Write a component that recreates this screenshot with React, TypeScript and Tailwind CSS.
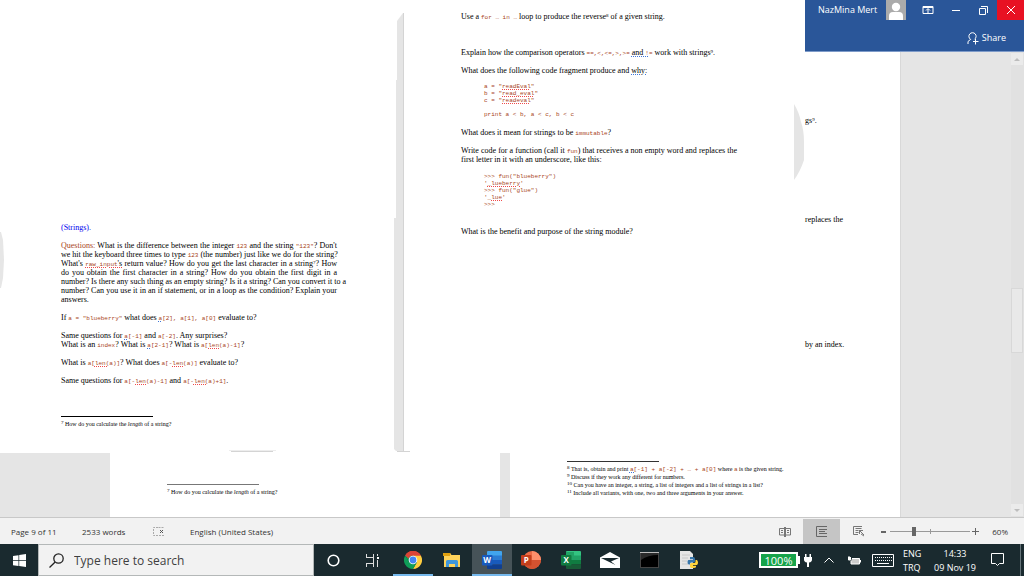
import type { ReactNode } from 'react';

function Code({ children }: { children: ReactNode }) {
  return <code className="font-['Liberation_Mono',monospace] text-[6px] leading-none text-[#a8441a]">{children}</code>;
}

function Wavy({ children }: { children: ReactNode }) {
  return <span className="underline decoration-[#f04a4a] decoration-dotted decoration-1 underline-offset-1">{children}</span>;
}

function BlueWavy({ children }: { children: ReactNode }) {
  return <span className="underline decoration-[#3f76d8] decoration-dotted decoration-1 underline-offset-1">{children}</span>;
}

function Sup({ children }: { children: ReactNode }) {
  return <sup className="text-[5px] leading-[0]">{children}</sup>;
}

function Justified({ children }: { children: ReactNode }) {
  return <span className="block whitespace-nowrap [text-align-last:justify]">{children}</span>;
}

function PageNine() {
  return (
    <article className="min-w-0 grow-[394] basis-0">
      <div className="flex flex-col gap-[9px] pl-[61px] pr-[57px] pt-[223px]">
        <p className="text-[#0000ee]">(Strings).</p>
        <p>
          <Justified>
            <span className="text-[#a8441a]">Questions:</span> What is the difference between the integer <Code>123</Code> and the string <Code>"123"</Code>? Don't
          </Justified>
          <Justified>we hit the keyboard three times to type <Code>123</Code> (the number) just like we do for the string?</Justified>
          <Justified>
            What's <Code><Wavy>raw_input</Wavy></Code><Wavy>'s</Wavy> return value? How do you get the last character in a string<Sup>7</Sup>? How
          </Justified>
          <Justified>do you obtain the first character in a string? How do you obtain the first digit in a</Justified>
          <Justified>number? Is there any such thing as an empty string? Is it a string? Can you convert it to a</Justified>
          <Justified>number? Can you use it in an if statement, or in a loop as the condition? Explain your</Justified>
          <span className="block">answers.</span>
        </p>
        <p>
          If <Code>a = "blueberry"</Code> what does <Code><BlueWavy>a[</BlueWavy>2], a[1], a[0]</Code> evaluate to?
        </p>
        <p>
          Same questions for <Code><BlueWavy>a[</BlueWavy>-1]</Code> and <Code>a[-2]</Code>. Any surprises?
          <br />
          What is an <Code>index</Code>? What is <Code><BlueWavy>a[</BlueWavy>2-1]</Code>? What is <Code>a[<Wavy>len(</Wavy>a)-1]</Code>?
        </p>
        <p>
          What is <Code>a[<Wavy>len(</Wavy>a)]</Code>? What does <Code>a[-<Wavy>len(</Wavy>a)]</Code> evaluate to?
        </p>
        <p>
          Same questions for <Code>a[-<Wavy>len(</Wavy>a)-1]</Code> and <Code>a[-<Wavy>len(</Wavy>a)+1]</Code>.
        </p>
      </div>
      <FootnoteSeven className="ml-[61px] mt-[31px]" rule="bg-black" />
    </article>
  );
}

function FootnoteSeven({ className, rule }: { className: string; rule: string }) {
  return (
    <div className={className}>
      <div className={`h-px w-[92px] ${rule}`} />
      <p className="mt-[3px] text-[6px] leading-[8px]">
        <Sup>7</Sup> How do you calculate the <i>length</i> of a string?
      </p>
    </div>
  );
}

function PageTen() {
  return (
    <article className="min-w-0 grow-[401] basis-0">
      <div className="pl-[57px] pr-[68px] pt-[12px]">
        <p>
          Use a <Code>for … in …</Code> loop to produce the reverse<Sup>8</Sup> of a given string.
        </p>
        <p className="mt-[27px]">
          Explain how the comparison operators <Code>==,&lt;,&lt;=,&gt;,&gt;=</Code> <BlueWavy>and <Code>!</Code></BlueWavy><Code>=</Code> work with strings<Sup>9</Sup>.
        </p>
        <p className="mt-[9px]">
          What does the following code fragment produce and <BlueWavy>why:</BlueWavy>
        </p>
        <pre className="ml-[23px] mt-[8px] font-['Liberation_Mono',monospace] text-[6px] leading-[7px] text-[#a8441a]">
          a = "<Wavy>readEval</Wavy>"{'\n'}b = "<Wavy>read_eval</Wavy>"{'\n'}c = "<Wavy>readeval</Wavy>"{'\n\n'}print a &lt; b, a &lt; c, b &lt; c
        </pre>
        <p className="mt-[10px]">
          What does it mean for strings to be <Code>immutable</Code>?
        </p>
        <p className="mt-[9px]">
          <Justified>Write code for a function (call it <Code>fun</Code>) that receives a non empty word and replaces the</Justified>
          <span className="block">first letter in it with an underscore, like this:</span>
        </p>
        <pre className="ml-[23px] mt-[9px] font-['Liberation_Mono',monospace] text-[6px] leading-[7px] text-[#a8441a]">
          &gt;&gt;&gt; fun("blueberry"){'\n'}'<Wavy>_lueberry</Wavy>'{'\n'}&gt;&gt;&gt; fun("glue"){'\n'}'_<Wavy>lue</Wavy>'{'\n'}&gt;&gt;&gt;
        </pre>
        <p className="mt-[19px]">What is the benefit and purpose of the string module?</p>
      </div>
    </article>
  );
}

function PageEdges() {
  return (
    <svg className="pointer-events-none absolute inset-0 h-full w-full" viewBox="0 0 805 453" preserveAspectRatio="none" aria-hidden="true">
      <path d="M0 232h1l2 8 1 20-1 18-2 10H0z" fill="#e6e6e6" />
      <path d="M397 21l6-8h1v438h-8l-2-2V218h2V80h1z" fill="#e5e5e5" />
      <path d="M403.5 13v438M397 451.5h13" stroke="#d4d4d4" fill="none" />
      <path d="M229 450.5h47" stroke="#ededed" />
      <path d="M231 451.5h42" stroke="#d4d4d4" />
      <path d="M794 104q5 8 7 18 3 8 3 20v18q-4 12-10 20z" fill="#e5e5e5" />
    </svg>
  );
}

function LowerPages() {
  return (
    <div className="flex flex-1 bg-[#e5e5e5]">
      <div className="grow-[110] basis-0" />
      <div className="min-w-0 grow-[390] basis-0 bg-white">
        <FootnoteSeven className="ml-[57px] mt-[31px]" rule="bg-[#777]" />
      </div>
      <div className="grow-[10] basis-0" />
      <div className="min-w-0 grow-[295] basis-0 bg-white">
        <div className="whitespace-nowrap pl-[57px] pt-[8px] text-[6px] leading-[8px]">
          <div className="mb-[3px] h-px w-[92px] bg-[#333]" />
          <p><Sup>8</Sup> That is, obtain and print <Code><BlueWavy>a[</BlueWavy>-1] + a[-2] + … + a[0]</Code> where <Code>a</Code> is the given string.</p>
          <p><Sup>9</Sup> Discuss if they work any different for numbers.</p>
          <p><Sup>10</Sup> Can you have an integer, a string, a list of integers and a list of strings in a list?</p>
          <p><Sup>11</Sup> Include all variants, with one, two and three arguments in your answer.</p>
        </div>
      </div>
    </div>
  );
}

function TitleBar() {
  return (
    <header className="h-[52px] border-b border-[#7e9bc9] bg-[#2a5699] text-white">
      <div className="flex h-5 items-center">
        <span className="w-[81px] whitespace-nowrap pl-[13px] text-[9px]">NazMina Mert</span>
        <svg className="h-5 w-5 bg-[#ababab]" viewBox="0 0 20 20" aria-hidden="true">
          <circle cx="10" cy="7" r="4.2" fill="#fff" />
          <path d="M3 20v-4q0-4 4-4h6q4 0 4 4v4z" fill="#fff" />
        </svg>
        <button aria-label="Ribbon display options" className="ml-3 flex h-5 w-5 items-center justify-center">
          <svg width="12" height="10" viewBox="0 0 12 10" fill="none" stroke="#fff">
            <path d="M1 1.5h10v7H1zM1 2.5h10M6 8V4M4 5.5l2-2 2 2" />
          </svg>
        </button>
        <button aria-label="Minimize" className="ml-2 flex h-5 w-5 items-center justify-center">
          <span className="h-px w-2 bg-white" />
        </button>
        <button aria-label="Restore" className="ml-[7px] flex h-5 w-5 items-center justify-center">
          <svg width="9" height="9" viewBox="0 0 9 9" fill="none" stroke="#fff">
            <path d="M.5 2.5h6v6h-6zM2 .5h6.500v6.500" />
          </svg>
        </button>
        <button aria-label="Close" className="ml-auto flex h-5 w-[27px] items-center justify-center bg-[#e81123]">
          <svg width="8" height="8" viewBox="0 0 8 8" stroke="#fff"><path d="M0 0l8 8M8 0L0 8" /></svg>
        </button>
      </div>
      <button className="ml-auto mr-[18px] mt-[10px] flex items-center gap-[3px] text-[9px] leading-[16px]">
        <svg width="12" height="13" viewBox="0 0 12 13" fill="none" stroke="#fff" aria-hidden="true">
          <path d="M3.500 7.300A3.600 3.600 0 1 1 7.500 7.300M3.800 7.200L1 9.500V12M8.500 7v5.500M6 9.500h5.500" />
        </svg>
        Share
      </button>
    </header>
  );
}

function ScrollBar() {
  return (
    <div className="flex w-[13px] flex-col bg-[#e1e1e1]">
      <button aria-label="Scroll up" className="mt-px flex h-3 w-3 items-center justify-center bg-[#ebebeb]">
        <svg width="6" height="3" viewBox="0 0 6 3" fill="#bdbdbd"><path d="M3 0l3 3H0z" /></svg>
      </button>
      <div className="flex-[224]" />
      <div className="h-[65px] w-3 border border-[#d8d8d8] bg-[#e9e9e9]" />
      <div className="flex-[152]" />
      <button aria-label="Scroll down" className="mb-px flex h-3 w-3 items-center justify-center bg-[#ebebeb]">
        <svg width="6" height="3" viewBox="0 0 6 3" fill="#bdbdbd"><path d="M0 0h6L3 3z" /></svg>
      </button>
    </div>
  );
}

function StatusBar() {
  return (
    <div className="flex h-[27px] shrink-0 items-center whitespace-nowrap border-t border-[#c8c8c8] bg-[#f2f2f2] pt-px text-[8px] text-[#333]">
      <span className="w-[71px] pl-[11px]">Page 9 of 11</span>
      <span className="w-[71px] pl-[11px]">2533 words</span>
      <button aria-label="Proofing" className="ml-[11px]">
        <svg width="12" height="10" viewBox="0 0 12 10" fill="none" stroke="#aaa">
          <path d="M5 .5H.5v8H5M5.500.5H11M6 8.500h5" strokeDasharray="2 1" />
          <path d="M7 3l3 3M10 3L7 6" stroke="#555" />
        </svg>
      </button>
      <span className="ml-[25px]">English (United States)</span>
      <button aria-label="Read mode" className="ml-auto flex h-full w-[37px] items-center justify-center">
        <svg width="12" height="10" viewBox="0 0 12 10" fill="none" stroke="#777">
          <path d="M5 1.500H.5v6.500H5M7 1.500h4.500v6.500H7M5.500 0v10M6.500 0v10M2 3.500h2M2 5.500h2M8 3.500h2M8 5.500h2" />
        </svg>
      </button>
      <button aria-label="Print layout" className="flex h-full w-[37px] items-center justify-center bg-[#c5c5c5]">
        <svg width="12" height="11" viewBox="0 0 12 11" fill="none" stroke="#666">
          <path d="M11 .5H.5v10H11M3 3.500h8M3 5.500h6M3 7.500h8" />
        </svg>
      </button>
      <button aria-label="Web layout" className="flex h-full w-[37px] items-center justify-center">
        <svg width="12" height="11" viewBox="0 0 12 11" fill="none" stroke="#777">
          <path d="M5 8.500H.5v-8H9M2.500 2.500h6M2.500 4.500h3M2.500 6.500h3" />
          <path d="M6 4l5 5M7 4.500l3 0M6.500 5v3M8 8l3 2" />
        </svg>
      </button>
      <button aria-label="Zoom out" className="ml-1 flex h-full w-[6px] items-center"><span className="h-[2px] w-[5px] bg-[#666]" /></button>
      <div className="ml-[3px] flex items-center">
        <input
          type="range"
          aria-label="Zoom"
          min="0"
          max="100"
          defaultValue="28"
          className="h-[9px] w-[80px] appearance-none bg-[linear-gradient(#999,#999),linear-gradient(#999,#999)] bg-[length:100%_1px,1px_5px] bg-center bg-no-repeat [&::-webkit-slider-thumb]:h-[9px] [&::-webkit-slider-thumb]:w-[4px] [&::-webkit-slider-thumb]:appearance-none [&::-webkit-slider-thumb]:bg-[#666]"
        />
      </div>
      <button aria-label="Zoom in" className="ml-[2px] flex h-full items-center">
        <svg width="7" height="7" viewBox="0 0 7 7" stroke="#666"><path d="M0 3.500h7M3.500 0v7" /></svg>
      </button>
      <span className="ml-[13px] mr-4">60%</span>
    </div>
  );
}

function OfficeGlyph({ kind }: { kind: 'W' | 'X' }) {
  const c = kind === 'W' ? ['#41a5ee', '#2b7cd3', '#185abd', '#103f91', '#185abd'] : ['#33c481', '#21a366', '#107c41', '#185c37', '#107c41'];
  return (
    <svg width="20" height="18" viewBox="0 0 20 18" aria-hidden="true">
      <path d="M5 1q0-1 1-1h13q1 0 1 1v4H5z" fill={c[0]} />
      <path d="M5 4.500h15V9H5z" fill={c[1]} />
      <path d="M5 9h15v4.500H5z" fill={c[2]} />
      <path d="M5 13.500h15V17q0 1-1 1H6q-1 0-1-1z" fill={c[3]} />
      {kind === 'X' && <path d="M5 1h8v8H5z" fill="#21a366" />}
      <rect y="4" width="10.500" height="10.500" rx="1" fill={c[4]} />
      <text x="5.200" y="12" textAnchor="middle" fontSize="8" fontWeight="700" fill="#fff" fontFamily="Open Sans, sans-serif">{kind}</text>
    </svg>
  );
}

function TaskButton({ label, active, open, children }: { label: string; active?: boolean; open?: boolean; children: ReactNode }) {
  return (
    <button
      aria-label={label}
      className={`flex items-center justify-center border-b-2 pt-[2px] ${active ? 'bg-[#465358]' : ''} ${active || open ? 'border-[#76b9ed]' : 'border-transparent'}`}
    >
      {children}
    </button>
  );
}

function TaskBar() {
  return (
    <footer className="flex h-8 shrink-0 items-stretch bg-[#1a2a2f] text-white">
      <button aria-label="Start" className="flex w-[38px] items-center justify-center">
        <svg width="13" height="13" viewBox="0 0 13 13" fill="#fff">
          <path d="M0 2l5.500-.8V6.200H0zM6.200 1L13 0v6.200H6.200zM0 6.900h5.500v5L0 11.200zM6.200 6.900H13V13l-6.800-1z" />
        </svg>
      </button>
      <label className="flex w-[276px] items-center gap-[10px] border border-[#b4b8b8] bg-[#f2f2f2] pl-[10px]">
        <svg className="shrink-0" width="15" height="15" viewBox="0 0 15 15" fill="none" stroke="#222" strokeWidth="1.300" aria-hidden="true">
          <circle cx="9.500" cy="5.500" r="4.700" /><path d="M6.200 9L.5 14.500" />
        </svg>
        <input
          type="search"
          aria-label="Search"
          placeholder="Type here to search"
          className="w-full min-w-0 bg-transparent pt-[2px] text-[12px] outline-none placeholder:text-[#3f3f3f]"
        />
      </label>
      <div className="grid w-[395px] grid-cols-10">
        <TaskButton label="Cortana">
          <svg width="13" height="13" viewBox="0 0 13 13"><circle cx="6.500" cy="6.500" r="5.300" fill="none" stroke="#fff" strokeWidth="1.600" /></svg>
        </TaskButton>
        <TaskButton label="Task view">
          <svg width="15" height="13" viewBox="0 0 15 13" fill="none" stroke="#ddd">
            <path d="M.5 0v3M7.500 0v3M0 3.500h8M0 9.500h8M.5 10v3M7.500 10v3M7.500 3v7M11.500 0v2M11.500 6v7" />
            <path d="M11 3h2v2h-2z" fill="#fff" stroke="none" />
          </svg>
        </TaskButton>
        <TaskButton label="Chrome" open>
          <svg width="18" height="18" viewBox="0 0 18 18">
            <path d="M9 9L1.200 4.500A9 9 0 0 1 16.800 4.500z" fill="#db4437" />
            <path d="M9 9V4.500h7.800A9 9 0 0 1 9 18l3.900-6.750z" fill="#ffcd40" />
            <path d="M9 9l3.900 2.250L9 18A9 9 0 0 1 1.200 4.500l3.900 6.750z" fill="#0f9d58" />
            <path d="M1.200 4.500L5.100 11.200 9 9V4.500z" fill="#0f9d58" />
            <path d="M1.200 4.500A9 9 0 0 1 16.800 4.500H9a4.500 4.500 0 0 0-4.300 3.200z" fill="#db4437" />
            <circle cx="9" cy="9" r="4.300" fill="#fff" /><circle cx="9" cy="9" r="3.400" fill="#4285f4" />
          </svg>
        </TaskButton>
        <TaskButton label="File Explorer">
          <svg width="18" height="15" viewBox="0 0 18 15">
            <path d="M1 0h6l1.500 2H17v12H1z" fill="#ffd35b" /><path d="M0 0h7.500L7 3H0z" fill="#e0a010" />
            <path d="M3 14V8.500Q3 7 4.500 7h9Q15 7 15 8.500V14h-3v-3H6v3z" fill="#4097dc" />
          </svg>
        </TaskButton>
        <TaskButton label="Word" active><OfficeGlyph kind="W" /></TaskButton>
        <TaskButton label="PowerPoint">
          <svg width="20" height="18" viewBox="0 0 20 18">
            <circle cx="11" cy="9" r="9" fill="#ed6c47" /><path d="M11 0a9 9 0 0 1 9 9h-9z" fill="#ff8f6b" />
            <path d="M2 9h18a9 9 0 0 1-18 0z" fill="#d35230" />
            <rect y="4" width="10.500" height="10.500" rx="1" fill="#c43e1c" />
            <text x="5.300" y="12" textAnchor="middle" fontSize="8" fontWeight="700" fill="#fff" fontFamily="Open Sans, sans-serif">P</text>
          </svg>
        </TaskButton>
        <TaskButton label="Excel"><OfficeGlyph kind="X" /></TaskButton>
        <TaskButton label="Mail">
          <svg width="20" height="16" viewBox="0 0 20 16">
            <path d="M0 5.500L10 0l10 5.500V16H0z" fill="#fff" /><path d="M1 6h18L11 9.500l4.500 3.500z" fill="#1a2a2f" />
          </svg>
        </TaskButton>
        <TaskButton label="Command Prompt">
          <svg width="19" height="16" viewBox="0 0 19 16">
            <rect x=".5" y=".5" width="18" height="15" fill="#000" stroke="#444" /><path d="M1 1h17v2Q8 3 1 8z" fill="#2a2a2a" /><path d="M0 .5h19" stroke="#bbb" />
          </svg>
        </TaskButton>
        <TaskButton label="Python">
          <svg width="18" height="18" viewBox="0 0 18 18">
            <path d="M0 0h10l3 3v15H0z" fill="#e5e5e5" /><path d="M2 4h8M2 7h6M2 10h5M2 13h6" stroke="#c8c8c8" />
            <path d="M10 6h3q2 0 2 2v2q0 1.500-1.500 1.500H11q-1 0-1 2H9q-1.500 0-1.500-2.500T9 9h4V8.300h-3z" fill="#3776ab" />
            <path d="M15.500 9H17q1 1 1 2.500T17 14h-4v.700h3V16q0 1-3 1t-3-1.500v-2q0-1.500 1.500-1.500H14q1.500 0 1.500-1.500z" fill="#ffd43b" />
          </svg>
        </TaskButton>
      </div>
      <div className="ml-auto flex items-center">
        <div className="flex items-center">
          <span className="flex h-4 w-[39px] items-center justify-center border-2 border-white bg-[#16a34a] text-[11px] leading-none">100%</span>
          <span className="h-2 w-[2px] bg-white" />
        </div>
        <svg className="ml-1" width="8" height="13" viewBox="0 0 8 13" fill="#fff" aria-hidden="true">
          <path d="M1 0h1.500v3h3V0H7v3h1v2.500Q8 8 5 8.500V13H3V8.500Q0 8 0 5.500V3h1z" />
        </svg>
        <button aria-label="Show hidden icons" className="ml-3">
          <svg width="10" height="6" viewBox="0 0 10 6" fill="none" stroke="#fff"><path d="M.5 5.500L5 1l4.500 4.500" /></svg>
        </button>
        <svg className="ml-[14px]" width="13" height="9" viewBox="0 0 13 9" aria-hidden="true">
          <path d="M4 2.500h7.500v5.500H3V5" fill="#ccc" stroke="#fff" /><path d="M12 4h1v2.500h-1zM0 1h3v3q-1 1-3 0z" fill="#fff" /><path d="M1 0v2" stroke="#fff" />
        </svg>
        <svg className="ml-[11px]" width="22" height="13" viewBox="0 0 22 13" fill="none" stroke="#fff" aria-hidden="true">
          <path d="M.5.5h21v12H.5z" /><path d="M3 3.500h17M3 6.500h17" strokeDasharray="1 1" /><path d="M5 9.500h12" />
        </svg>
        <div className="ml-[9px] w-[28px] pt-[2px] text-[9px] leading-[14px]">ENG<br />TRQ</div>
        <div className="w-[48px] whitespace-nowrap pt-[2px] text-center text-[9px] leading-[14px]">14:33<br />09 Nov 19</div>
        <button aria-label="Notifications" className="ml-3">
          <svg width="13" height="14" viewBox="0 0 13 14" fill="none" stroke="#fff"><path d="M.5.5h12v10H8.500l-2 2-2-2h-4z" /></svg>
        </button>
        <span className="ml-4 mr-[3px] h-8 w-px bg-[#66757a]" />
      </div>
    </footer>
  );
}

export default function App() {
  return (
    <div className="flex h-screen flex-col overflow-hidden bg-white font-['Open_Sans','Noto_Sans',sans-serif]">
      <main className="flex min-h-0 flex-1">
        <div className="flex min-w-0 flex-1 flex-col font-['Liberation_Serif',serif] text-[8px] leading-[9px] text-black">
          <div className="relative flex basis-[453px]">
            <PageNine />
            <div className="grow-[10] basis-0" />
            <PageTen />
            <PageEdges />
          </div>
          <LowerPages />
        </div>
        <div className="flex w-[219px] flex-col">
          <TitleBar />
          <div className="flex flex-1">
            <div className="w-[95px] whitespace-nowrap pt-[64px] font-['Liberation_Serif',serif] text-[8px] leading-[9px]">
              <p>gs<Sup>9</Sup>.</p>
              <p className="mt-[90px]">replaces the</p>
              <p className="mt-[116px]">by an index.</p>
            </div>
            <div className="flex-1 border-l border-[#d8d8d8] bg-[#e5e5e5]" />
            <ScrollBar />
          </div>
        </div>
      </main>
      <StatusBar />
      <TaskBar />
    </div>
  );
}
